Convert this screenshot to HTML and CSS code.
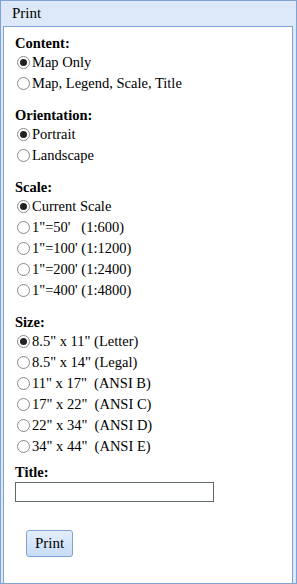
FILE: index.html
```html
<!DOCTYPE html>
<html lang="en">
<head>
<meta charset="UTF-8">
<title>Print</title>
<link rel="stylesheet" href="styles.css">
</head>
<body>

<div class="panel">
    <div class="panel-header">Print</div>
    <div class="panel-body">

        <div class="group">
            <div class="group-title">Content:</div>
            <label class="option"><input type="radio" name="content" checked>Map Only</label>
            <label class="option"><input type="radio" name="content">Map, Legend, Scale, Title</label>
        </div>

        <div class="group">
            <div class="group-title">Orientation:</div>
            <label class="option"><input type="radio" name="orient" checked>Portrait</label>
            <label class="option"><input type="radio" name="orient">Landscape</label>
        </div>

        <div class="group">
            <div class="group-title">Scale:</div>
            <label class="option"><input type="radio" name="scale" checked>Current Scale</label>
            <label class="option"><input type="radio" name="scale">1"=50'   (1:600)</label>
            <label class="option"><input type="radio" name="scale">1"=100' (1:1200)</label>
            <label class="option"><input type="radio" name="scale">1"=200' (1:2400)</label>
            <label class="option"><input type="radio" name="scale">1"=400' (1:4800)</label>
        </div>

        <div class="group group-size">
            <div class="group-title">Size:</div>
            <label class="option"><input type="radio" name="size" checked>8.5" x 11" (Letter)</label>
            <label class="option"><input type="radio" name="size">8.5" x 14" (Legal)</label>
            <label class="option"><input type="radio" name="size">11" x 17"  (ANSI B)</label>
            <label class="option"><input type="radio" name="size">17" x 22"  (ANSI C)</label>
            <label class="option"><input type="radio" name="size">22" x 34"  (ANSI D)</label>
            <label class="option"><input type="radio" name="size">34" x 44"  (ANSI E)</label>
        </div>

        <div class="group">
            <div class="group-title">Title:</div>
            <input type="text" class="title-input">
        </div>

        <button class="print-btn">Print</button>
    </div>
</div>

</body>
</html>
```

FILE: styles.css
```css
body {
    margin: 0;
    font-family: "Liberation Serif", "Times New Roman", serif;
    font-size: 14.5px;
    color: #000;
}
.panel {
    width: 297px;
    height: 584px;
    box-sizing: border-box;
    border: 1px solid #7fa4d4;
    background: #dde9f8;
    display: flex;
    flex-direction: column;
    padding: 0 3px 0 2px;
}
.panel-header {
    height: 25px;
    line-height: 25px;
    font-size: 15px;
    padding-left: 9px;
}
.panel-body {
    flex: 1;
    background: #fff;
    border: 1px solid #7fa4d4;
    border-bottom: none;
    padding: 8px 0 0 11px;
}
.group {
    display: flex;
    flex-direction: column;
    margin-bottom: 13px;
}
.group-size {
    margin-bottom: 7px;
}
.group-title {
    font-weight: bold;
    line-height: 17px;
}
.option {
    display: flex;
    align-items: center;
    height: 21px;
    white-space: pre;
}
.option input {
    appearance: none;
    width: 13px;
    height: 13px;
    margin: 0 2px 0 2px;
    border: 1px solid #8a8a8a;
    border-radius: 50%;
    box-sizing: border-box;
    background: #fff;
    position: relative;
}
.option input:checked::after {
    content: "";
    position: absolute;
    left: 2px;
    top: 2px;
    width: 7px;
    height: 7px;
    border-radius: 50%;
    background: #222;
}
.title-input {
    width: 199px;
    height: 20px;
    box-sizing: border-box;
    border: 1px solid #5f6b5f;
    margin: 1px 0 0 0;
    padding: 0 3px;
}
.print-btn {
    margin: 15px 0 0 11px;
    width: 47px;
    height: 27px;
    border: 1px solid #7fa4d4;
    border-radius: 3px;
    background: linear-gradient(#e3eefc, #c8dcf5);
    font-family: "Liberation Serif", "Times New Roman", serif;
    font-size: 15px;
    padding: 0;
    cursor: pointer;
}
```
